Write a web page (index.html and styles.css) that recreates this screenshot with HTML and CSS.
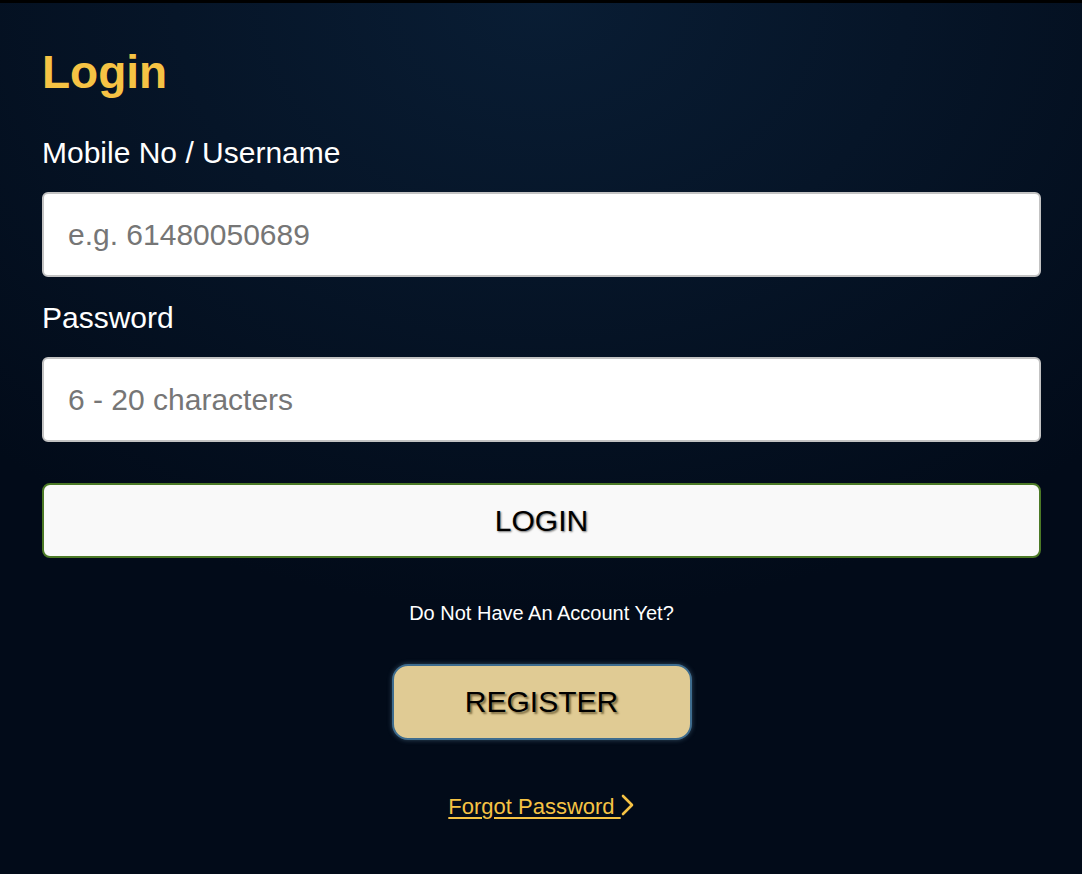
FILE: index.html
```html
<!DOCTYPE html>
<html lang="en">
<head>
<meta charset="utf-8">
<title>Login</title>
<link rel="stylesheet" href="styles.css">
</head>
<body>
<div class="topbar"></div>
<main class="panel">
  <h1 class="title">Login</h1>
  <form class="form" onsubmit="return false">
    <label class="label" for="user">Mobile No / Username</label>
    <input class="field" id="user" type="text" placeholder="e.g. 61480050689">
    <label class="label" for="pass">Password</label>
    <input class="field" id="pass" type="password" placeholder="6 - 20 characters">
    <button class="btn-login" type="submit">LOGIN</button>
  </form>
  <p class="hint">Do Not Have An Account Yet?</p>
  <div class="center">
    <button class="btn-register" type="button">REGISTER</button>
  </div>
  <div class="center">
    <a class="forgot" href="#">Forgot Password <svg class="chev" width="14" height="22" viewBox="0 0 14 22"><polyline points="2,2 11,11 2,20" fill="none" stroke="#f6c344" stroke-width="2.6" stroke-linecap="round" stroke-linejoin="round"/></svg></a>
  </div>
</main>
</body>
</html>
```

FILE: styles.css
```css
html, body {
  margin: 0;
  padding: 0;
}
body {
  min-height: 874px;
  font-family: "Liberation Sans", Arial, Helvetica, sans-serif;
  color: #fff;
  background-color: #020b19;
  background-image: radial-gradient(ellipse 75% 70% at 50% 0%, #091d34 0%, #061528 45%, #020b19 100%);
}
.topbar {
  height: 3px;
  background: #000;
}
.panel {
  padding: 0 41px 40px 42px;
}
.title {
  margin: 46px 0 0;
  font-size: 46px;
  line-height: 46px;
  font-weight: 700;
  color: #f6c344;
}
.form {
  display: flex;
  flex-direction: column;
}
.label {
  display: block;
  font-size: 30px;
  line-height: 30px;
  margin: 43px 0 24px;
  color: #fff;
}
.field + .label {
  margin-top: 26px;
}
.field {
  box-sizing: border-box;
  height: 85px;
  width: 100%;
  padding: 0 24px;
  border: 2px solid #c3c3c3;
  border-radius: 6px;
  background: #fff;
  font-family: inherit;
  font-size: 30px;
  color: #222;
  outline: none;
}
.field::placeholder {
  color: #767676;
}
.btn-login {
  box-sizing: border-box;
  margin-top: 41px;
  height: 75px;
  width: 100%;
  border: 2px solid #4c7a26;
  border-radius: 8px;
  background: #f9f9f9;
  font-family: inherit;
  font-size: 30px;
  color: #000;
  text-shadow: 1px 1px 2px rgba(0,0,0,0.55);
  cursor: pointer;
}
.hint {
  margin: 45px 0 0;
  text-align: center;
  font-size: 20px;
  line-height: 20px;
}
.center {
  display: flex;
  justify-content: center;
}
.btn-register {
  box-sizing: border-box;
  margin-top: 41px;
  width: 300px;
  height: 76px;
  border: 2px solid #3e6c8e;
  border-radius: 16px;
  background: #e0cb94;
  font-family: inherit;
  font-size: 30px;
  color: #000;
  text-shadow: 2px 2px 2px rgba(60,45,10,0.6);
  box-shadow: 0 0 5px rgba(140,190,220,0.35);
  cursor: pointer;
}
.forgot {
  margin-top: 56px;
  display: inline-flex;
  align-items: center;
  font-size: 22px;
  line-height: 22px;
  color: #f6c344;
  text-decoration: underline;
  text-underline-offset: 3px;
  white-space: pre;
}
.chev {
  display: block;
  margin-top: -4px;
}
```
